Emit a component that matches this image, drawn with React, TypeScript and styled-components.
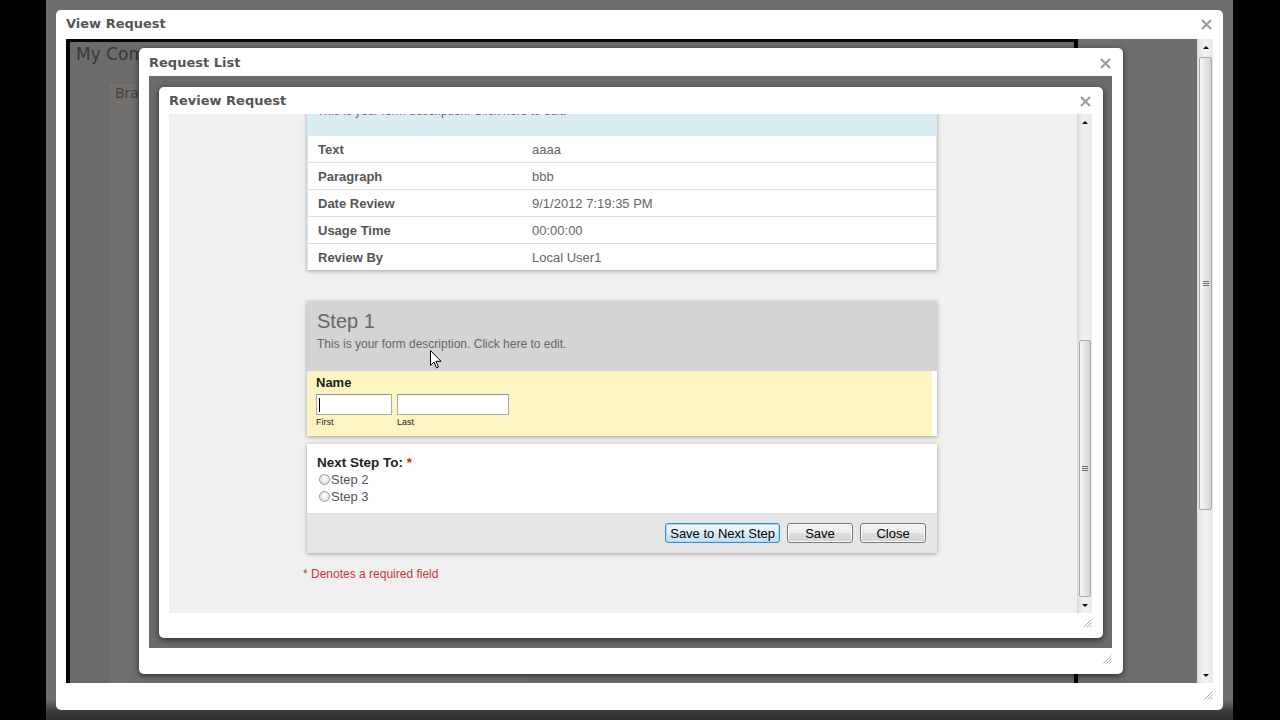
import React from 'react'
import styled, { createGlobalStyle } from 'styled-components'

const GlobalStyle = createGlobalStyle`
  html, body {
    margin: 0;
    padding: 0;
    background: #000;
  }
  body {
    width: 1280px;
    height: 720px;
    overflow: hidden;
    font-family: "Liberation Sans", Arial, sans-serif;
  }
  * { box-sizing: border-box; }
`

type Place = { left: number; top: number; width: number; height: number }

const Frame = styled.div`
  display: flex;
  width: 1280px;
  height: 720px;
  background: #000;
`

const Screen = styled.div`
  margin-left: 46px;
  width: 1187px;
  height: 720px;
  padding: 10px 10px 10px;
  display: flex;
  flex-direction: column;
  background: linear-gradient(#6e6e6e 0, #6e6e6e 700px, #3c3c3c 711px, #2f2f2f 100%);
`

const WindowBox = styled.section<{ $place?: Place; $padR: number; $shadow?: boolean }>`
  display: flex;
  flex-direction: column;
  padding: 0 ${p => p.$padR}px 0 10px;
  background: #fff;
  border-radius: 5px;
  box-shadow: ${p => (p.$shadow ? '0 2px 6px rgba(0,0,0,0.6)' : 'none')};
  ${p =>
    p.$place
      ? `position: absolute;
         left: ${p.$place.left}px;
         top: ${p.$place.top}px;
         width: ${p.$place.width}px;
         height: ${p.$place.height}px;`
      : 'flex: 1;'}
`

const TitleBar = styled.header<{ $h: number; $lift: number }>`
  height: ${p => p.$h}px;
  display: flex;
  align-items: center;
  justify-content: space-between;
  padding-bottom: ${p => p.$lift}px;
`

const Title = styled.h2`
  margin: 0;
  font: bold 13px "DejaVu Sans", Verdana, sans-serif;
  color: #555;
`

const CloseBtn = styled.span`
  display: flex;
  margin-right: 1px;
  margin-top: 3px;
`

const Body = styled.div`
  flex: 1;
  min-height: 0;
  display: flex;
  position: relative;
`

const Footer = styled.footer<{ $h: number }>`
  height: ${p => p.$h}px;
  display: flex;
  justify-content: flex-end;
  align-items: flex-end;
  padding-bottom: 10px;
`

function CloseIcon() {
  return (
    <svg width="11" height="11" viewBox="0 0 11 11">
      <path d="M1 1 L10 10 M10 1 L1 10" stroke="#9b9b9b" strokeWidth="2" />
    </svg>
  )
}

function Grip() {
  return (
    <svg width="10" height="10" viewBox="0 0 10 10">
      <path d="M9.5 1.5 L1.5 9.5 M9.5 4.5 L4.5 9.5 M9.5 7.5 L7.5 9.5" stroke="#a8a8a8" strokeWidth="1" />
    </svg>
  )
}

function Window({
  title,
  titleH,
  lift,
  footH,
  padR,
  place,
  shadow,
  children,
}: {
  title: string
  titleH: number
  lift: number
  footH: number
  padR: number
  place?: Place
  shadow?: boolean
  children: React.ReactNode
}) {
  return (
    <WindowBox $place={place} $padR={padR} $shadow={shadow}>
      <TitleBar $h={titleH} $lift={lift}>
        <Title>{title}</Title>
        <CloseBtn>
          <CloseIcon />
        </CloseBtn>
      </TitleBar>
      <Body>{children}</Body>
      <Footer $h={footH}>
        <Grip />
      </Footer>
    </WindowBox>
  )
}

/* scrollbar */

const Track = styled.div<{ $w: number }>`
  width: ${p => p.$w}px;
  display: flex;
  flex-direction: column;
  background: linear-gradient(90deg, #e2e2e2, #f2f2f2 45%, #e9e9e9);
  border-left: 1px solid #dadada;
`

const ArrowBox = styled.div`
  height: 16px;
  display: flex;
  align-items: center;
  justify-content: center;
`

const Triangle = styled.span<{ $down?: boolean }>`
  width: 0;
  height: 0;
  border-left: 3px solid transparent;
  border-right: 3px solid transparent;
  ${p => (p.$down ? 'border-top: 3px solid #111;' : 'border-bottom: 3px solid #111;')}
`

const Thumb = styled.div<{ $top: number; $h: number }>`
  margin: ${p => p.$top}px 1px 0;
  height: ${p => p.$h}px;
  border: 1px solid #a9a9a9;
  border-radius: 2px;
  background: linear-gradient(90deg, #f6f6f6, #e4e4e4 55%, #d2d2d2);
  display: flex;
  flex-direction: column;
  align-items: center;
  justify-content: center;
  gap: 1px;
`

const GripLine = styled.span`
  width: 6px;
  height: 1px;
  background: #6f6f6f;
`

const TrackSpace = styled.div`
  flex: 1;
`

function Scrollbar({ w, top, h }: { w: number; top: number; h: number }) {
  return (
    <Track $w={w}>
      <ArrowBox>
        <Triangle />
      </ArrowBox>
      <Thumb $top={top} $h={h}>
        <GripLine />
        <GripLine />
        <GripLine />
      </Thumb>
      <TrackSpace />
      <ArrowBox>
        <Triangle $down />
      </ArrowBox>
    </Track>
  )
}

/* view request page (dimmed) */

const ViewPage = styled.div`
  flex: 1;
  position: relative;
  background: #6e6e6e;
  overflow: hidden;
  display: flex;
`

const DimmedDoc = styled.div`
  width: 1012px;
  border: solid #050505;
  border-width: 3px 4px 0 4px;
  background: #6b6b6b;
  padding: 2px 0 0 6px;
  display: flex;
  flex-direction: column;
`

const CompanyName = styled.div`
  font: 17px/20px "DejaVu Sans", Verdana, sans-serif;
  color: #383838;
`

const BranchBox = styled.div`
  flex: 1;
  margin: 20px 0 0 34px;
  width: 420px;
  border-top: 1px dotted #85756a;
  border-left: 1px dotted #85756a;
  background: #706f6e;
  padding: 0 0 0 4px;
  font: 14px/16px "DejaVu Sans", Verdana, sans-serif;
  color: #4c3f35;
`

const ListPage = styled.div`
  flex: 1;
  position: relative;
  background: #6b6b6b;
`

/* review request content */

const ReviewContent = styled.div`
  flex: 1;
  position: relative;
  overflow: hidden;
  background: #f0f0f0;
`

const FormColumn = styled.div`
  width: 630px;
  margin: -44px auto 0;
  display: flex;
  flex-direction: column;
  transform: translateX(-1px);
`

const Card = styled.div`
  background: #fff;
  box-shadow: 0 1px 4px rgba(0, 0, 0, 0.35);
  display: flex;
  flex-direction: column;
`

const FormHeader = styled.div`
  background: #d9ecf2;
  padding: 10px 10px 18px;
`

const FormTitle = styled.div`
  font-size: 20px;
  line-height: 24px;
  color: #555;
`

const FormDesc = styled.div`
  font-size: 12px;
  line-height: 14px;
  color: #666;
`

const InfoRow = styled.div<{ $last?: boolean }>`
  display: grid;
  grid-template-columns: 214px 1fr;
  align-items: center;
  height: ${p => (p.$last ? 26 : 27)}px;
  padding: 0 10px;
  border-bottom: ${p => (p.$last ? 'none' : '1px solid #dedede')};
  border-left: 1px solid #e4e4e4;
  border-right: 1px solid #e4e4e4;
  font-size: 13px;
`

const InfoLabel = styled.span`
  font-weight: bold;
  color: #555;
`

const InfoValue = styled.span`
  color: #666;
`

const StepCard = styled(Card)`
  margin-top: 31px;
`

const StepHeader = styled.div`
  background: #d4d4d4;
  padding: 8px 10px 20px;
`

const StepTitle = styled.div`
  font-size: 20px;
  line-height: 24px;
  color: #666;
  margin-bottom: 4px;
`

const FieldArea = styled.div`
  background: #fcf5c1;
  margin-right: 5px;
  padding: 4px 9px 8px;
`

const FieldLabel = styled.div`
  font-size: 13px;
  line-height: 16px;
  font-weight: bold;
  color: #1e1e1e;
`

const NameRow = styled.div`
  display: flex;
  gap: 5px;
  margin-top: 3px;
`

const NamePart = styled.div`
  display: flex;
  flex-direction: column;
`

const TextBox = styled.input<{ $w: number; $focus?: boolean }>`
  width: ${p => p.$w}px;
  height: 21px;
  margin: 0;
  padding: 0 3px;
  border: 1px solid #a9adb3;
  border-top-color: #8f9296;
  outline: none;
  background: ${p =>
    p.$focus ? 'linear-gradient(#000, #000) no-repeat 2px 3px / 1px 14px, #fff' : '#fff'};
`

const SubLabel = styled.span`
  font-size: 9px;
  line-height: 11px;
  margin-top: 2px;
  color: #222;
`

const ActionCard = styled(Card)`
  margin-top: 8px;
`

const ChoiceArea = styled.div`
  padding: 10px 10px 8px;
  display: flex;
  flex-direction: column;
`

const ChoiceTitle = styled.div`
  font-size: 13.5px;
  line-height: 17px;
  font-weight: bold;
  color: #222;
`

const Required = styled.span`
  color: #d22;
`

const ChoiceRow = styled.label`
  display: flex;
  align-items: center;
  font-size: 13px;
  line-height: 17px;
  color: #555;
`

const RadioDot = styled.span`
  width: 11px;
  height: 11px;
  margin: 0 1px 0 2px;
  border-radius: 50%;
  border: 1px solid #9a9a9a;
  background: radial-gradient(circle at 50% 40%, #fff, #d6d6d6);
`

const ButtonBar = styled.div`
  height: 40px;
  background: #e6e6e6;
  border-top: 1px solid #dcdcdc;
  display: flex;
  align-items: center;
  justify-content: flex-end;
  gap: 7px;
  padding: 0 11px 1px;
`

const Btn = styled.button<{ $focus?: boolean }>`
  height: 20px;
  min-width: 66px;
  padding: 0 4px;
  font: 13px "Liberation Sans", Arial, sans-serif;
  color: #000;
  border-radius: 3px;
  border: 1px solid ${p => (p.$focus ? '#3d8bc4' : '#777')};
  box-shadow: ${p => (p.$focus ? 'inset 0 0 0 1px #a6dcf7' : 'inset 0 0 0 1px #fcfcfc')};
  background: ${p =>
    p.$focus
      ? 'linear-gradient(#eef7fd, #e2f1fb 50%, #d2e9f7 50%, #c7e2f3)'
      : 'linear-gradient(#f4f4f4, #ececec 50%, #dedede 50%, #d3d3d3)'};
`

const Footnote = styled.div`
  margin: 14px 0 0 -4px;
  font-size: 12px;
  line-height: 14px;
  color: #c8363a;
`

const Cursor = styled.svg`
  position: absolute;
  left: 261px;
  top: 236px;
`

const infoRows: [string, string][] = [
  ['Text', 'aaaa'],
  ['Paragraph', 'bbb'],
  ['Date Review', '9/1/2012 7:19:35 PM'],
  ['Usage Time', '00:00:00'],
  ['Review By', 'Local User1'],
]

function ReviewForm() {
  return (
    <ReviewContent>
      <FormColumn>
        <Card>
          <FormHeader>
            <FormTitle>Untitled Form</FormTitle>
            <FormDesc>This is your form description. Click here to edit.</FormDesc>
          </FormHeader>
          {infoRows.map(([label, value], i) => (
            <InfoRow key={label} $last={i === infoRows.length - 1}>
              <InfoLabel>{label}</InfoLabel>
              <InfoValue>{value}</InfoValue>
            </InfoRow>
          ))}
        </Card>

        <StepCard>
          <StepHeader>
            <StepTitle>Step 1</StepTitle>
            <FormDesc>This is your form description. Click here to edit.</FormDesc>
          </StepHeader>
          <FieldArea>
            <FieldLabel>Name</FieldLabel>
            <NameRow>
              <NamePart>
                <TextBox $w={76} $focus readOnly />
                <SubLabel>First</SubLabel>
              </NamePart>
              <NamePart>
                <TextBox $w={112} readOnly />
                <SubLabel>Last</SubLabel>
              </NamePart>
            </NameRow>
          </FieldArea>
        </StepCard>

        <ActionCard>
          <ChoiceArea>
            <ChoiceTitle>
              Next Step To: <Required>*</Required>
            </ChoiceTitle>
            <ChoiceRow>
              <RadioDot />
              Step 2
            </ChoiceRow>
            <ChoiceRow>
              <RadioDot />
              Step 3
            </ChoiceRow>
          </ChoiceArea>
          <ButtonBar>
            <Btn $focus>Save to Next Step</Btn>
            <Btn>Save</Btn>
            <Btn>Close</Btn>
          </ButtonBar>
        </ActionCard>

        <Footnote>* Denotes a required field</Footnote>
      </FormColumn>

      <Cursor width="12" height="19" viewBox="0 0 12 19">
        <path d="M0.5 0.5 L0.5 15.5 L4 12 L6.5 18 L8.5 17 L6 11.3 L11 11.3 Z" fill="#fff" stroke="#000" strokeWidth="1" />
      </Cursor>
    </ReviewContent>
  )
}

export default function App() {
  return (
    <>
      <GlobalStyle />
      <Frame>
        <Screen>
          <Window title="View Request" titleH={29} lift={3} footH={27} padR={10}>
            <ViewPage>
              <DimmedDoc>
                <CompanyName>My Company</CompanyName>
                <BranchBox>Branch</BranchBox>
              </DimmedDoc>

              <Window
                title="Request List"
                titleH={28}
                lift={0}
                footH={26}
                padR={11}
                shadow
                place={{ left: 73, top: 9, width: 984, height: 626 }}
              >
                <ListPage>
                  <Window
                    title="Review Request"
                    titleH={27}
                    lift={1}
                    footH={25}
                    padR={11}
                    shadow
                    place={{ left: 10, top: 11, width: 944, height: 551 }}
                  >
                    <ReviewForm />
                    <Scrollbar w={15} top={210} h={257} />
                  </Window>
                </ListPage>
              </Window>
            </ViewPage>
            <Scrollbar w={16} top={2} h={453} />
          </Window>
        </Screen>
      </Frame>
    </>
  )
}
